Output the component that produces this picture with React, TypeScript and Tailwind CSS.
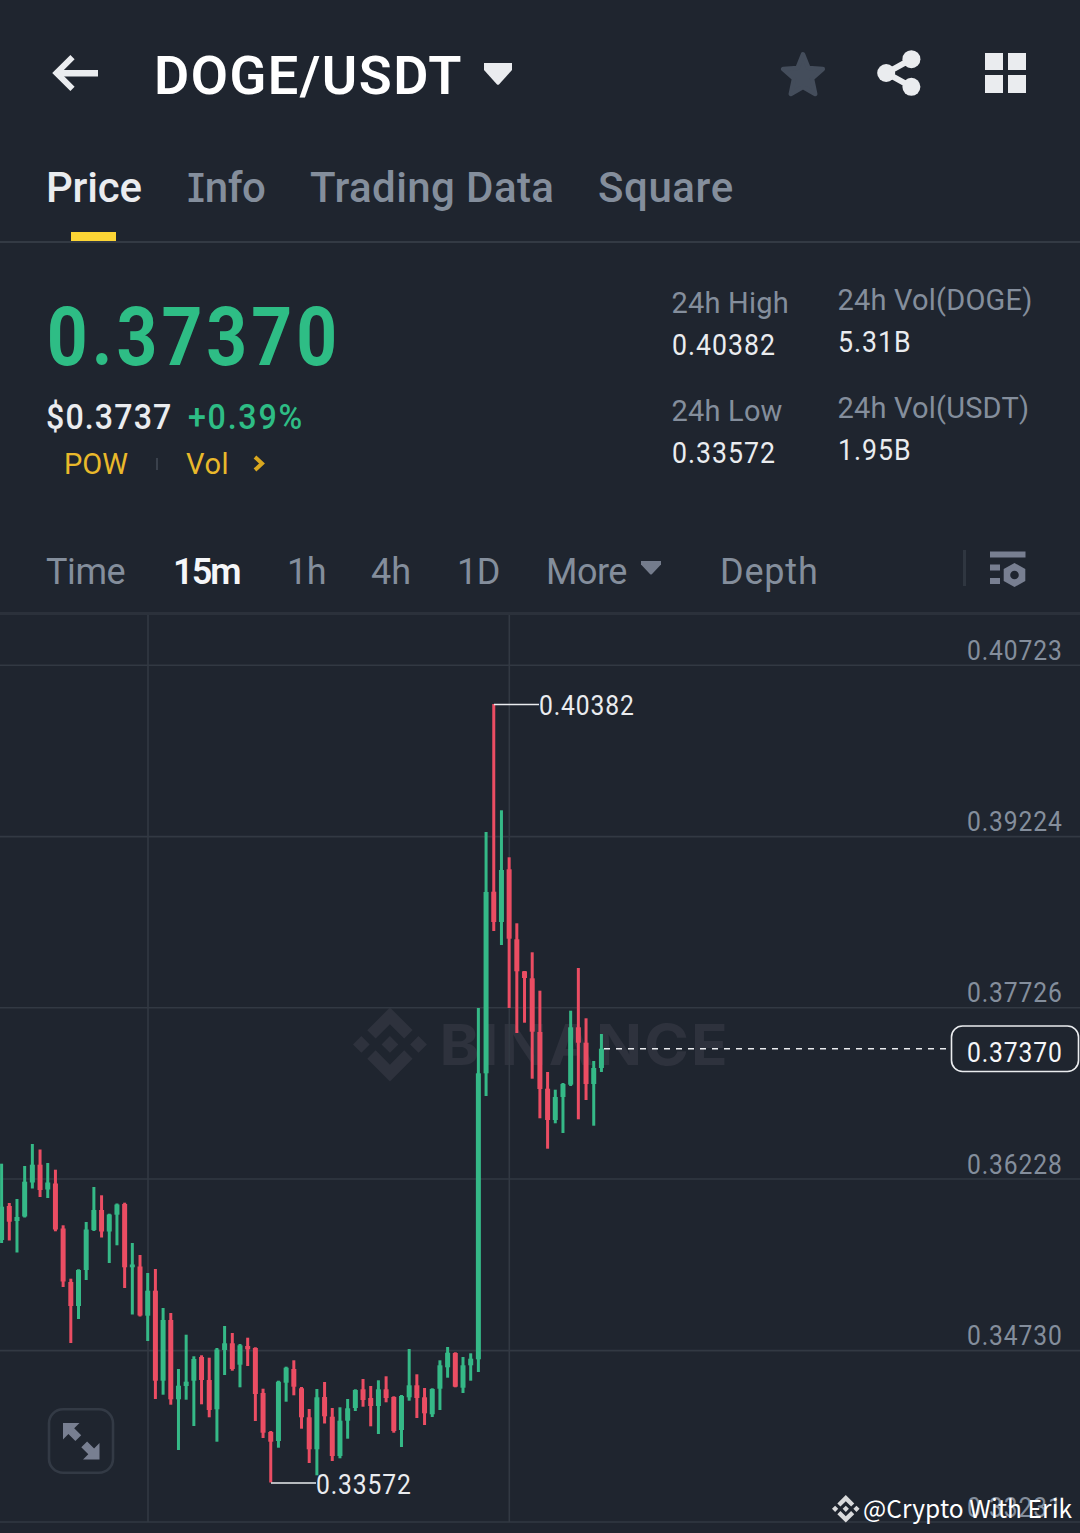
type Candle = [up: 0 | 1, high: number, top: number, bottom: number, low: number];

const CANDLES: Candle[] = [
  [1, 1163.7, 1206.7, 1240, 1243],
  [0, 1203, 1206, 1221.7, 1240.5],
  [1, 1199, 1217, 1221, 1252.5],
  [1, 1166, 1181.7, 1216.5, 1217.5],
  [1, 1144, 1164.7, 1182.5, 1188.5],
  [0, 1149.5, 1164.7, 1190, 1197],
  [1, 1163, 1182.5, 1189.5, 1198],
  [0, 1169.7, 1183.5, 1229.5, 1231.3],
  [0, 1225.3, 1228.5, 1281.5, 1287],
  [0, 1278.7, 1282, 1306, 1343],
  [1, 1269.3, 1270, 1306, 1319],
  [1, 1222, 1229.5, 1270, 1280],
  [1, 1187, 1210, 1230, 1231],
  [0, 1195.3, 1210, 1231.5, 1237.5],
  [1, 1213.7, 1214.5, 1231.5, 1263],
  [1, 1203.5, 1204.5, 1214.7, 1245.3],
  [0, 1202.7, 1204, 1267.3, 1288],
  [1, 1243, 1264.5, 1267.3, 1314.5],
  [0, 1255, 1266.5, 1315.5, 1316.5],
  [1, 1273, 1290.7, 1315.7, 1341],
  [0, 1269, 1290.7, 1380.7, 1399],
  [1, 1308, 1320, 1380.7, 1394.7],
  [0, 1313, 1320, 1399.3, 1404.7],
  [1, 1369, 1385.7, 1399.3, 1450],
  [1, 1334.7, 1381.7, 1386, 1399.7],
  [1, 1356.3, 1359, 1380.7, 1426],
  [0, 1355.3, 1357, 1380, 1404.3],
  [0, 1357.7, 1380, 1410, 1417.3],
  [1, 1348, 1349.5, 1409.3, 1441.7],
  [1, 1326, 1343.3, 1350, 1375],
  [0, 1333, 1343.3, 1369, 1370.7],
  [1, 1344, 1345.3, 1364.7, 1387.3],
  [0, 1337.7, 1346, 1349.3, 1366],
  [0, 1347.3, 1348, 1394, 1421],
  [0, 1388.7, 1393, 1432.7, 1438],
  [0, 1431, 1432, 1441.7, 1482.5],
  [1, 1380.7, 1381.7, 1441, 1447.7],
  [1, 1366.7, 1367.7, 1382.7, 1401.7],
  [0, 1360.3, 1369, 1386.7, 1395.3],
  [0, 1387, 1388.3, 1417.3, 1428.7],
  [0, 1409, 1417.3, 1449.3, 1463],
  [1, 1389, 1397.3, 1449.3, 1475.3],
  [0, 1382, 1397, 1416.3, 1423.5],
  [0, 1408, 1416.7, 1456, 1461],
  [1, 1407.3, 1420.7, 1456, 1458.3],
  [1, 1399, 1408.3, 1420.7, 1438.7],
  [1, 1389.3, 1390, 1408, 1411],
  [0, 1379, 1389.3, 1400, 1406.7],
  [0, 1386, 1398, 1406, 1426.3],
  [1, 1380.3, 1389.3, 1406, 1434],
  [0, 1376.3, 1389.3, 1398, 1402.3],
  [0, 1396.3, 1397, 1431, 1432.7],
  [1, 1395, 1396, 1430, 1447],
  [1, 1349, 1385.3, 1397.3, 1400.7],
  [0, 1374.3, 1385.3, 1398, 1418],
  [0, 1388, 1397.3, 1413.3, 1425],
  [1, 1388.3, 1389, 1414.3, 1417],
  [1, 1360.3, 1365.3, 1388.7, 1410],
  [1, 1347, 1352.7, 1367.3, 1377.7],
  [0, 1352.3, 1353, 1386.7, 1387.3],
  [1, 1357, 1365.3, 1387.7, 1393],
  [1, 1353.3, 1358.7, 1365.3, 1380.7],
  [1, 1008, 1073.3, 1359.3, 1372],
  [1, 832, 892, 1073.3, 1096],
  [0, 704, 891.7, 922, 931],
  [1, 810.3, 870, 922, 945],
  [0, 857.3, 869.3, 938.7, 1008],
  [0, 923.3, 939.3, 971.3, 1033],
  [0, 971, 971.3, 978, 1022.7],
  [0, 952.3, 978.3, 1031.7, 1078.7],
  [0, 990.7, 1032, 1089, 1118.3],
  [0, 1072, 1088.7, 1120, 1148.7],
  [1, 1089.7, 1097, 1120, 1123.3],
  [1, 1083, 1084, 1097, 1133],
  [1, 1010.7, 1027.3, 1084.7, 1086],
  [0, 968, 1027.3, 1042.7, 1119.3],
  [0, 1018.3, 1042.7, 1084, 1100],
  [1, 1061, 1068, 1084, 1125.7],
  [1, 1034, 1048.7, 1068, 1072],
];

const GRID_LEVELS: [number, string][] = [
  [665.3, "0.40723"],
  [836.6, "0.39224"],
  [1007.8, "0.37726"],
  [1179, "0.36228"],
  [1350.6, "0.34730"],
  [1522, "0.33231"],
];

const BINANCE_MARK =
  "M16.624 13.92l2.7175 2.7154-7.353 7.353-7.353-7.352 2.7175-2.7164 4.6355 4.6595 4.6356-4.6595zm4.6366-4.6366L24 12l-2.7154 2.7164L18.5682 12l2.6924-2.7164zm-9.272.001l2.7163 2.6914-2.7164 2.7174v-.001L9.2721 12l2.7164-2.7154zm-9.2722-.001L5.4088 12l-2.6914 2.6924L0 12l2.7164-2.7164zM11.9885.0115l7.353 7.329-2.7174 2.7154-4.6356-4.6356-4.6355 4.6595-2.7174-2.7154 7.353-7.353z";

function Header() {
  return (
    <header className="flex h-[147px] items-center pb-[2px] pl-[52px] pr-[54px]">
      <svg className="h-[36px] w-[46px]" viewBox="0 0 46 36" fill="none" stroke="#eaecef">
        <path d="M4 18.2H46" strokeWidth="6.4" />
        <path d="M20.5 2.2L4.5 18L20.5 33.8" strokeWidth="6" />
      </svg>
      <h1 className="ml-[56px] w-[330px] pt-[7px] text-[54px] font-semibold leading-none tracking-[1.5px] text-white">
        DOGE/USDT
      </h1>
      <svg className="mt-[2px] h-[22px] w-[28px]" viewBox="0 0 28 22" fill="#eaecef">
        <path d="M0 0H28V7L15.2 21.2Q14 22.4 12.8 21.2L0 7Z" />
      </svg>
      <div className="ml-auto flex items-center">
        <svg className="mt-[2px] h-[46px] w-[46px]" viewBox="0 0 46 46" fill="#444d5b" stroke="#444d5b" strokeWidth="4.5" strokeLinejoin="round">
          <path d="M23 3.3L28.4 16.9L42.8 18.1L32 27.6L35.2 43L23 36L10.8 43L14 27.6L3.2 18.1L17.6 16.9Z" />
        </svg>
        <svg className="ml-[51px] h-[46px] w-[44px]" viewBox="0 0 44 46" fill="#eaecef">
          <path d="M34 9.3L9.5 23L34 36.7" fill="none" stroke="#eaecef" strokeWidth="6" />
          <circle cx="34.4" cy="9.2" r="9" />
          <circle cx="9.2" cy="23" r="9" />
          <circle cx="34.4" cy="36.8" r="9" />
        </svg>
        <div className="ml-[64px] grid h-[40px] w-[41px] grid-cols-2 gap-[5px]">
          <span className="bg-[#eaecef]" />
          <span className="bg-[#eaecef]" />
          <span className="bg-[#eaecef]" />
          <span className="bg-[#eaecef]" />
        </div>
      </div>
    </header>
  );
}

function Tabs() {
  return (
    <nav className="flex h-[96px] items-start border-b-2 border-[#333a44] pl-[46px] pt-[17px] text-[42px] font-medium leading-[48px] text-[#848e9c]">
      <div className="w-[141px]">
        <div className="tracking-[-0.2px] text-[#eaecef]">Price</div>
        <div className="ml-[25px] mt-[20px] h-[9px] w-[45px] bg-[#fcd535]" />
      </div>
      <div className="w-[123px] tracking-[-0.4px]">
        <span className="font-['Inter'] text-[40px] [font-feature-settings:'cv08']">I</span>nfo
      </div>
      <div className="w-[288px] tracking-[0.4px]">Trading Data</div>
      <div className="tracking-[0.6px]">Square</div>
    </nav>
  );
}

function Stat({ label, value }: { label: string; value: string }) {
  return (
    <div className="leading-[42px]">
      <div className="whitespace-nowrap tracking-[0.2px] text-[#848e9c]">{label}</div>
      <div className="origin-left scale-x-[0.92] tracking-[1.1px] text-[#eaecef]">{value}</div>
    </div>
  );
}

function Summary() {
  return (
    <section className="flex h-[288px] pl-[46px]">
      <div className="w-[625.5px] pt-[52px]">
        <div className="origin-left scale-x-[0.87] pl-[1px] text-[82px] font-bold leading-[84px] tracking-[4.6px] text-[#2ebd85]">
          0.37370
        </div>
        <div className="mt-[14px] flex text-[35px] font-medium leading-[49px]">
          <span className="w-[142px] origin-left scale-x-[0.92] tracking-[1.2px] text-[#eaecef]">$0.3737</span>
          <span className="origin-left scale-x-[0.92] tracking-[1.9px] text-[#2ebd85]">+0.39%</span>
        </div>
        <div className="flex h-[44px] items-center pl-[18px] text-[29px] leading-[44px] text-[#e9b92b]">
          <span className="w-[92px]">POW</span>
          <span className="h-[12px] w-[2px] bg-[#3a414c]" />
          <span className="ml-[28px] w-[67px] tracking-[0.6px]">Vol</span>
          <svg className="mb-[2px] h-[17px] w-[13px]" viewBox="0 0 13 17" fill="none" stroke="#d9a71f" strokeWidth="4">
            <path d="M2 2L9 8.5L2 15" />
          </svg>
        </div>
      </div>
      <div className="w-[166px] space-y-[24px] pt-[39px] text-[29px]">
        <Stat label="24h High" value="0.40382" />
        <Stat label="24h Low" value="0.33572" />
      </div>
      <div className="space-y-[24px] pt-[36px] text-[29px]">
        <Stat label="24h Vol(DOGE)" value="5.31B" />
        <Stat label="24h Vol(USDT)" value="1.95B" />
      </div>
    </section>
  );
}

function Intervals() {
  return (
    <div className="flex h-[84px] items-center border-b-[3px] border-[#2b313b] pl-[46px] text-[36px] leading-none text-[#848e9c]">
      <span className="w-[127px] tracking-[-0.4px]">Time</span>
      <span className="w-[114px] font-semibold tracking-[-1.9px] text-[#f5f6f8]">15m</span>
      <span className="w-[84px] tracking-[-0.5px]">1h</span>
      <span className="w-[86px]">4h</span>
      <span className="w-[89px] tracking-[-0.5px]">1D</span>
      <span className="w-[95px] tracking-[-0.5px]">More</span>
      <svg className="mb-[8px] h-[14px] w-[20px]" viewBox="0 0 20 14" fill="#747c8c">
        <path d="M0 0H20V3.5L10.8 13.2Q10 14 9.2 13.2L0 3.5Z" />
      </svg>
      <span className="ml-[59px] w-[243px] tracking-[0.8px]">Depth</span>
      <span className="mb-[7px] h-[36px] w-[3px] bg-[#2f3640]" />
      <svg className="mb-[5px] ml-[24px] h-[36px] w-[36px]" viewBox="0 0 36 36" fill="#787f91">
        <path d="M0 0.5H35.5V6.5H0ZM0 13.5H10V19.5H0ZM0 27H10V33H0Z" />
        <path fillRule="evenodd" d="M24.5 12L35.3 18V30L24.5 36L13.7 30V18ZM24.5 19.7A4.3 4.3 0 1 0 24.5 28.3A4.3 4.3 0 1 0 24.5 19.7Z" />
      </svg>
    </div>
  );
}

function Label({ x, y, fill, children }: { x: number; y: number; fill: string; children: string }) {
  return (
    <text transform={`translate(${x} ${y}) scale(0.92 1)`} fill={fill} fontSize="26.8" letterSpacing="0.95">
      {children}
    </text>
  );
}

function Chart() {
  return (
    <svg className="block h-[918px] w-[1080px]" viewBox="0 615 1080 918">
      <g fill="#2e323d">
        <path transform="translate(353 1007.5) scale(3.08)" d={BINANCE_MARK} />
        <text
          transform="translate(439.5 1064.5) scale(1.06 1)"
          fontFamily="Inter"
          fontWeight="700"
          fontSize="57"
          letterSpacing="2"
        >
          BINANCE
        </text>
      </g>
      <g stroke="#323943" strokeWidth="1.6">
        {GRID_LEVELS.map(([y]) => (
          <line key={y} x1="0" x2="1080" y1={y} y2={y} />
        ))}
        <line x1="148" x2="148" y1="615" y2="1522" />
        <line x1="509.3" x2="509.3" y1="615" y2="1522" />
      </g>
      {GRID_LEVELS.map(([y, label]) => (
        <Label key={label} x={967} y={y - 5.5} fill="#848e9c">
          {label}
        </Label>
      ))}
      {CANDLES.map(([up, high, top, bottom, low], i) => {
        const x = 1.6 + i * 7.69;
        return (
          <g key={i} fill={up ? "#35b987" : "#eb4d63"}>
            <rect x={x - 1.5} y={high} width="3" height={low - high} />
            <rect x={x - 2.5} y={top} width="5" height={bottom - top} />
          </g>
        );
      })}
      <g stroke="#eaecef" strokeWidth="1.6">
        <line x1="494" x2="539" y1="704.5" y2="704.5" />
        <line x1="271" x2="316" y1="1483" y2="1483" />
        <line x1="604" x2="947" y1="1048.7" y2="1048.7" strokeDasharray="6 6" />
      </g>
      <Label x={539} y={714.9} fill="#eaecef">
        0.40382
      </Label>
      <Label x={316} y={1493.9} fill="#eaecef">
        0.33572
      </Label>
      <rect x="951.5" y="1026" width="127" height="45.5" rx="11" fill="#1f252f" stroke="#eaecef" strokeWidth="1.6" />
      <Label x={967} y={1061.7} fill="#f5f6f8">
        0.37370
      </Label>
      <rect x="49" y="1409.3" width="64" height="63.5" rx="14" fill="#1f252f" stroke="#333a45" strokeWidth="2.6" />
      <g fill="#787f91">
        <path d="M63 1423H79.5L74.2 1428.3L81.2 1435.2L75.4 1441L68.4 1434L63 1439.5Z" />
        <path d="M99.5 1459.5H83L88.3 1454.2L81.3 1447.3L87.1 1441.5L94.1 1448.5L99.5 1443Z" />
      </g>
      <path transform="translate(832 1495) scale(1.15)" fill="#d9dadc" d={BINANCE_MARK} />
      <text
        x="863"
        y="1518"
        fill="#ffffff"
        fontFamily="Noto Sans CJK SC"
        fontWeight="400"
        fontSize="24.5"
        textLength="209"
      >
        @Crypto With Erik
      </text>
    </svg>
  );
}

export default function App() {
  return (
    <div className="h-[1533px] w-[1080px] overflow-hidden bg-[#1f252f] font-['Roboto',sans-serif]">
      <Header />
      <Tabs />
      <Summary />
      <Intervals />
      <Chart />
    </div>
  );
}
